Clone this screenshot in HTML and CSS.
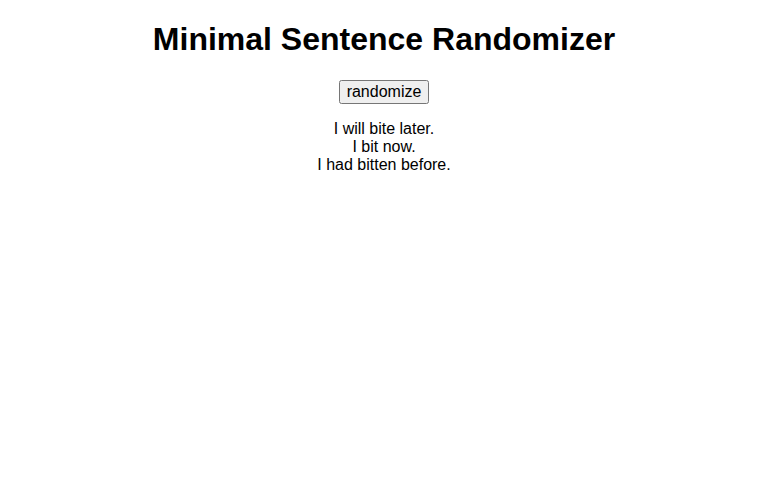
FILE: index.html
```html
<!DOCTYPE html>
<html lang="en">
<head>
  <meta charset="UTF-8" />
  <meta name="viewport" content="width=device-width, initial-scale=1.0" />
  <title>Minimal Sentence Randomizer</title>
  <link rel="stylesheet" href="styles.css">
</head>
<body>

  <h1>Minimal Sentence Randomizer</h1>

  <p class="controls">
    <button id="randomize">randomize</button>
  </p>

  <div class="sentences" id="sentences">
    <div>I will bite later.</div>
    <div>I bit now.</div>
    <div>I had bitten before.</div>
  </div>

</body>
</html>
```

FILE: styles.css
```css
body {
  margin: 0 8px;
  font-family: "Liberation Sans", Arial, sans-serif;
  text-align: center;
}

h1 {
  font-size: 32px;
}

button {
  font-family: "Liberation Sans", Arial, sans-serif;
  font-size: 16px;
}

.sentences {
  line-height: 18px;
}
```
